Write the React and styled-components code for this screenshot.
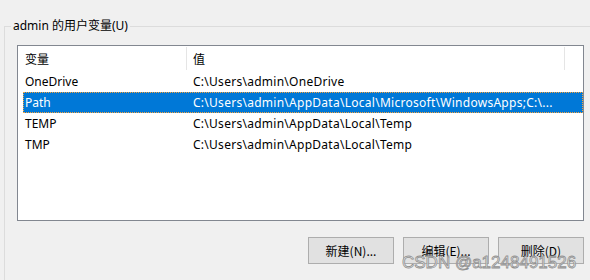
import React from "react";
import styled, { createGlobalStyle } from "styled-components";

const Global = createGlobalStyle`
  html, body { margin: 0; padding: 0; background: #f0f0f0; }
  body {
    font-family: "Microsoft YaHei UI", "Noto Sans", "Noto Sans CJK SC", sans-serif;
    font-size: 12px;
    color: #000;
  }
`;

const Page = styled.div`
  position: relative;
  width: 590px;
  height: 280px;
  overflow: hidden;
  padding-top: 18px;
  box-sizing: border-box;
`;

const Group = styled.fieldset`
  margin: 0 0 0 4px;
  padding: 0 0 0 12px;
  border: 1px solid #dcdcdc;
  border-right: none;
  border-bottom: none;
  height: 300px;
  box-sizing: border-box;
  min-width: 0;
`;

const Legend = styled.legend`
  margin-left: -6px;
  padding: 0 2px;
  height: 16px;
  line-height: 16px;
  font-size: 12px;
  font-family: "Noto Sans", "Noto Sans CJK SC", sans-serif;
`;

const ListBox = styled.div`
  margin-top: 11px;
  width: 567px;
  height: 176px;
  box-sizing: border-box;
  border: 1px solid #828790;
  background: #fff;
  overflow: hidden;
`;

const Header = styled.div`
  display: grid;
  grid-template-columns: 164px 378px;
  height: 25px;
  padding: 1px 0 0 5px;
  box-sizing: border-box;
`;

const HeadCell = styled.div`
  border-right: 1px solid #e5e5e5;
  padding-left: ${(p) => p.$pad}px;
  display: flex;
  align-items: center;
  height: 23px;
  font-family: "Noto Sans CJK SC", sans-serif;
  font-size: 12px;
`;

const Rows = styled.div`
  padding-left: 5px;
`;

const Row = styled.div`
  display: grid;
  grid-template-columns: 168px 374px;
  height: 21px;
  box-sizing: border-box;
  align-items: center;
  background: ${(p) => (p.$selected ? "#0078d7" : "transparent")};
  color: ${(p) => (p.$selected ? "#fff" : "#000")};
  outline: ${(p) => (p.$selected ? "1px dotted #f7a33c" : "none")};
  outline-offset: -1px;
`;

const Cell = styled.div`
  padding-left: 2px;
  white-space: nowrap;
  overflow: hidden;
  font-family: "Noto Sans", "Noto Sans CJK SC", sans-serif;
  font-size: 12px;
  line-height: 21px;
  letter-spacing: ${(p) => (p.$value ? "0.27px" : "0")};
`;

const Buttons = styled.div`
  display: flex;
  justify-content: flex-end;
  gap: 9px;
  width: 567px;
  margin-top: 16px;
`;

const Button = styled.button`
  width: 86px;
  height: 27px;
  box-sizing: border-box;
  border: 1px solid #adadad;
  background: #e1e1e1;
  font-family: "Noto Sans CJK SC", sans-serif;
  font-size: 12px;
  color: #000;
  padding: 0;
  display: flex;
  align-items: center;
  justify-content: center;
`;

const Watermark = styled.div`
  position: absolute;
  left: 402px;
  top: 253px;
  font-family: "Liberation Sans", Arial, sans-serif;
  font-size: 17px;
  color: rgba(240, 240, 240, 0.85);
  -webkit-text-stroke: 0.8px #909090;
  pointer-events: none;
`;

const vars = [
  ["OneDrive", "C:\\Users\\admin\\OneDrive"],
  ["Path", "C:\\Users\\admin\\AppData\\Local\\Microsoft\\WindowsApps;C:\\..."],
  ["TEMP", "C:\\Users\\admin\\AppData\\Local\\Temp"],
  ["TMP", "C:\\Users\\admin\\AppData\\Local\\Temp"],
];

export default function App() {
  return (
    <Page>
      <Global />
      <Group>
        <Legend>admin 的用户变量(U)</Legend>
        <ListBox>
          <Header>
            <HeadCell $pad={2}>变量</HeadCell>
            <HeadCell $pad={6}>值</HeadCell>
          </Header>
          <Rows>
            {vars.map(([k, v]) => (
              <Row key={k} $selected={k === "Path"}>
                <Cell>{k}</Cell>
                <Cell $value>{v}</Cell>
              </Row>
            ))}
          </Rows>
        </ListBox>
        <Buttons>
          <Button>新建(N)...</Button>
          <Button>编辑(E)...</Button>
          <Button>删除(D)</Button>
        </Buttons>
      </Group>
      <Watermark>CSDN @a1248491526</Watermark>
    </Page>
  );
}
